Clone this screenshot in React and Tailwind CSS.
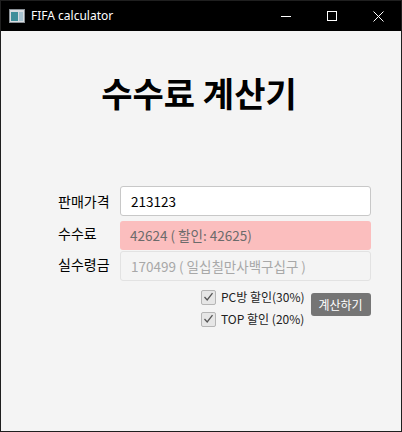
import React from "react";

const kr = { fontFamily: '"Malgun Gothic", "Noto Sans CJK KR", "Noto Sans", sans-serif' };

function CheckBox({ label }) {
  return (
    <label className="flex items-center gap-[5px] h-[22px]">
      <span className="w-[15px] h-[15px] rounded-[2px] border border-[#b5b5b5] bg-[#e6e6e6] flex items-center justify-center">
        <svg width="11" height="10" viewBox="0 0 11 10">
          <path d="M1.5 5 L4.2 8 L9.5 1.2" fill="none" stroke="#555" strokeWidth="1.3" />
        </svg>
      </span>
      <span className="text-[12px] text-[#222]">{label}</span>
    </label>
  );
}

export default function App() {
  return (
    <div className="w-[402px] h-[432px] border border-[#1f1f1f] bg-[#f4f4f4] flex flex-col" style={kr}>
      {/* title bar */}
      <div className="h-[30px] bg-black flex items-center text-white shrink-0">
        <svg className="ml-[8px]" width="16" height="14" viewBox="0 0 16 14">
          <rect x="0.5" y="0.5" width="15" height="13" fill="#d9dde0" stroke="#8a9096" />
          <rect x="2" y="3" width="7" height="9" fill="#3f8f9a" />
          <rect x="10" y="3" width="4" height="9" fill="#a7c3d0" />
        </svg>
        <span className="ml-[6px] text-[12px]" style={{ fontFamily: '"Segoe UI", "Noto Sans", sans-serif' }}>FIFA calculator</span>
        <div className="ml-auto flex h-full">
          <div className="w-[46px] flex items-center justify-center">
            <svg width="10" height="10" viewBox="0 0 10 10"><path d="M0 5.5 H10" stroke="#fff" strokeWidth="1" /></svg>
          </div>
          <div className="w-[46px] flex items-center justify-center">
            <svg width="10" height="10" viewBox="0 0 10 10"><rect x="0.5" y="0.5" width="9" height="9" fill="none" stroke="#fff" strokeWidth="1" /></svg>
          </div>
          <div className="w-[46px] flex items-center justify-center">
            <svg width="11" height="11" viewBox="0 0 11 11"><path d="M0.5 0.5 L10.5 10.5 M10.5 0.5 L0.5 10.5" stroke="#fff" strokeWidth="1" /></svg>
          </div>
        </div>
      </div>

      {/* heading */}
      <h1 className="text-center font-bold text-[34px] text-black mt-[40px] leading-[44px] mr-[4px]">수수료 계산기</h1>

      {/* form */}
      <div className="mt-[71px] grid grid-cols-[79px_251px] ml-[40px] text-[14px]">
        <div className="flex items-center pl-[17px] h-[30px] text-black">판매가격</div>
        <div className="h-[30px] bg-white border border-[#c8c8c8] rounded-[3px] flex items-center px-[10px] text-[13.5px] text-black">213123</div>
        <div className="flex items-center pl-[17px] h-[29px] mt-[5px] text-black -translate-y-[2px]">수수료</div>
        <div className="h-[29px] mt-[5px] bg-[#fbbebe] rounded-[3px] flex items-center px-[10px] text-[13.5px] text-[#6b6b6b]">42624 ( 할인: 42625)</div>
        <div className="flex items-center pl-[17px] h-[30px] mt-[1px] text-black -translate-y-[2px]">실수령금</div>
        <div className="h-[30px] mt-[1px] border border-[#e2e2e2] rounded-[3px] flex items-center px-[10px] text-[13.5px] text-[#a8a8a8]">170499 ( 일십칠만사백구십구 )</div>
      </div>

      {/* options */}
      <div className="flex ml-[200px] mt-[5px]">
        <div className="flex flex-col">
          <CheckBox label="PC방 할인(30%)" />
          <CheckBox label="TOP 할인 (20%)" />
        </div>
        <button className="ml-[6px] mt-[7px] h-[23px] w-[60px] rounded-[3px] bg-[#757575] text-white text-[12px] flex items-center justify-center">계산하기</button>
      </div>
    </div>
  );
}
